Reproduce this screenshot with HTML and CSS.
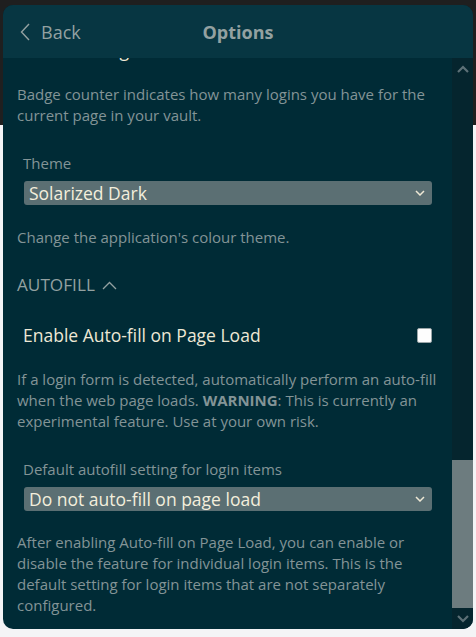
FILE: index.html
```html
<!DOCTYPE html>
<html>
<head>
<meta charset="utf-8">
<link rel="stylesheet" href="styles.css">
</head>
<body>
<div class="popup">
  <header class="header">
    <div class="back">
      <svg class="back-icon" width="10" height="18" viewBox="0 0 10 18"><path d="M9 1 L1.5 9 L9 17" fill="none" stroke="#93a1a1" stroke-width="1.4"/></svg>
      <span>Back</span>
    </div>
    <div class="title">Options</div>
  </header>
  <div class="main">
    <div class="content">
      <div class="inner">
        <div class="field-row hidden-row"><span>Disable Badge Counter</span></div>
        <p class="desc d1">Badge counter indicates how many logins you have for the current page in your vault.</p>

        <div class="label l1">Theme</div>
        <div class="select"><span>Solarized Dark</span><svg width="10" height="6" viewBox="0 0 10 6"><path d="M1 1 L5 5 L9 1" fill="none" stroke="#eee8d5" stroke-width="1.5"/></svg></div>
        <p class="desc d2">Change the application's colour theme.</p>

        <div class="section"><span>AUTOFILL</span><svg width="15" height="9" viewBox="0 0 15 9"><path d="M1 8 L7.5 1.5 L14 8" fill="none" stroke="#93a1a1" stroke-width="1.3"/></svg></div>

        <div class="field-row enable"><span>Enable Auto-fill on Page Load</span><span class="checkbox"></span></div>
        <p class="desc d3">If a login form is detected, automatically perform an auto-fill when the web page loads. <b>WARNING</b>: This is currently an experimental feature. Use at your own risk.</p>

        <div class="label l2">Default autofill setting for login items</div>
        <div class="select"><span>Do not auto-fill on page load</span><svg width="10" height="6" viewBox="0 0 10 6"><path d="M1 1 L5 5 L9 1" fill="none" stroke="#eee8d5" stroke-width="1.5"/></svg></div>
        <p class="desc d4">After enabling Auto-fill on Page Load, you can enable or disable the feature for individual login items. This is the default setting for login items that are not separately configured.</p>
      </div>
    </div>
    <div class="scrollbar">
      <div class="sb-btn"><svg width="12" height="8" viewBox="0 0 12 8"><path d="M1 7 L6 2 L11 7" fill="none" stroke="#5d7077" stroke-width="2.2"/></svg></div>
      <div class="sb-track"><div class="sb-thumb"></div></div>
      <div class="sb-btn"><svg width="12" height="8" viewBox="0 0 12 8"><path d="M1 1 L6 6 L11 1" fill="none" stroke="#5d7077" stroke-width="2.2"/></svg></div>
    </div>
  </div>
</div>
</body>
</html>
```

FILE: styles.css
```css
html, body {
  margin: 0;
  padding: 0;
}
body {
  width: 476px;
  height: 637px;
  overflow: hidden;
  background: linear-gradient(to bottom, #1f1f1f 0, #1f1f1f 125px, #f4f4f6 125px);
  font-family: "Open Sans", "Liberation Sans", sans-serif;
}
.popup {
  margin: 5px 0 0 3px;
  width: 470px;
  height: 624px;
  border-radius: 10px;
  overflow: hidden;
  background: #002b36;
  display: flex;
  flex-direction: column;
}
.header {
  height: 53px;
  flex: none;
  background: #073642;
  position: relative;
  display: flex;
  align-items: center;
  z-index: 2;
}
.back {
  display: flex;
  align-items: center;
  padding-left: 17px;
  color: #93a1a1;
  font-size: 18px;
}
.back-icon {
  margin-right: 11px;
}
.title {
  position: absolute;
  left: 0;
  right: 0;
  text-align: center;
  font-weight: 700;
  font-size: 18px;
  color: #93a1a1;
  pointer-events: none;
}
.main {
  flex: 1;
  display: flex;
  min-height: 0;
}
.content {
  flex: 1;
  overflow: hidden;
}
.inner {
  padding: 0 20px 0 14px;
}
.field-row {
  display: flex;
  align-items: center;
  justify-content: space-between;
  height: 24px;
  padding-left: 6px;
  font-size: 17.5px;
  color: #eee8d5;
}
.hidden-row {
  margin-top: -20px;
}
.desc {
  margin: 0 -10px 0 0;
  font-size: 15px;
  line-height: 21px;
  color: #839496;
}
.desc b {
  font-weight: 700;
}
.d1 { margin-top: 21.5px; }
.label {
  padding-left: 6px;
  font-size: 15px;
  line-height: 21px;
  color: #839496;
}
.l1 { margin-top: 27px; }
.select {
  margin: 7.5px 0 0 7px;
  height: 24px;
  border-radius: 3px;
  background: #5b6f73;
  display: flex;
  align-items: center;
  justify-content: space-between;
  padding: 0 7px 0 5px;
  color: #f3eedc;
  font-size: 17.5px;
}
.d2 { margin-top: 21.5px; }
.section {
  margin-top: 26.5px;
  font-size: 17.2px;
  line-height: 22px;
  color: #93a1a1;
  display: flex;
  align-items: center;
  gap: 7px;
}
.enable {
  margin-top: 27px;
}
.checkbox {
  width: 13px;
  height: 13px;
  background: #fdfdfd;
  border: 1px solid #9aa5a8;
  border-radius: 2px;
}
.d3 { margin-top: 21.5px; }
.l2 { margin-top: 27px; }
.d4 { margin-top: 20.5px; }
.scrollbar {
  width: 21px;
  flex: none;
  background: #05252e;
  display: flex;
  flex-direction: column;
}
.sb-btn {
  height: 21px;
  display: flex;
  align-items: center;
  justify-content: center;
}
.sb-track {
  flex: 1;
  display: flex;
  flex-direction: column;
  justify-content: flex-end;
}
.sb-thumb {
  height: 148px;
  background: #6d7c7f;
}
```
